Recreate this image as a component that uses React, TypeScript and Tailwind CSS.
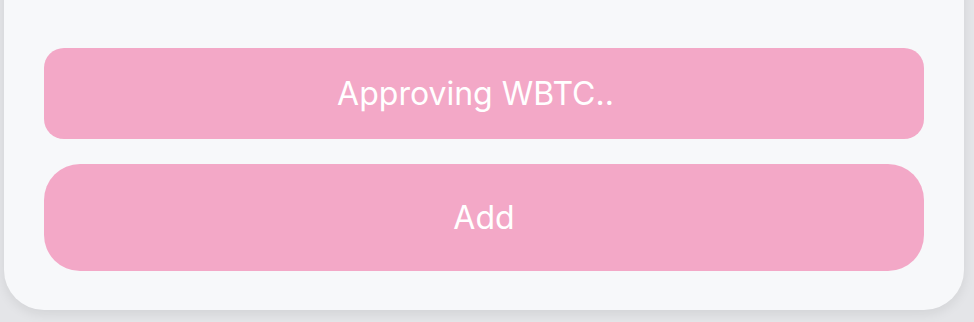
export default function App() {
  return (
    <div
      className="w-[974px] h-[322px] bg-[#e4e5e8] overflow-hidden"
      style={{ fontFamily: "Inter, 'Liberation Sans', sans-serif" }}
    >
      <div className="mx-[4px] -mt-[40px] h-[350px] w-[960px] rounded-b-[40px] bg-[#f7f8fa] shadow-[0_4px_12px_rgba(0,0,0,0.08)] px-[40px] pt-[88px] flex flex-col gap-[25px]">
        <button className="h-[91px] w-full rounded-[20px] bg-[#f3a8c7] text-white text-[32px] font-normal">
          Approving WBTC..<span className="inline-block w-[17px]" />
        </button>
        <button className="h-[107px] w-full rounded-[36px] bg-[#f3a8c7] text-white text-[32px] font-normal">
          Add
        </button>
      </div>
    </div>
  );
}
